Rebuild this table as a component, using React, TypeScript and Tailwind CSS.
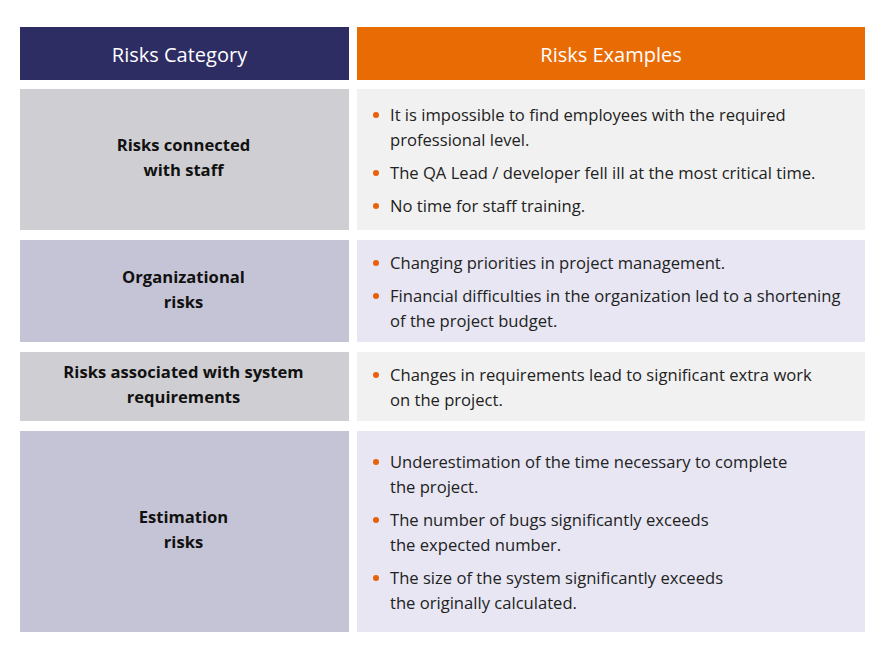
import React from "react";

const rows: { cat: React.ReactNode; items: React.ReactNode[]; h: string; left: string; right: string }[] = [
  {
    cat: (<>Risks connected<br />with staff</>),
    items: [
      (<>It is impossible to find employees with the required<br />professional level.</>),
      (<>The QA Lead / developer fell ill at the most critical time.</>),
      (<>No time for staff training.</>),
    ],
    h: "h-[141px]",
    left: "bg-[#cfcfd3]",
    right: "bg-[#f1f1f1]",
  },
  {
    cat: (<>Organizational<br />risks</>),
    items: [
      (<>Changing priorities in project management.</>),
      (<>Financial difficulties in the organization led to a shortening<br />of the project budget.</>),
    ],
    h: "h-[102px]",
    left: "bg-[#c5c4d6]",
    right: "bg-[#e7e6f2]",
  },
  {
    cat: (<>Risks associated with system<br />requirements</>),
    items: [
      (<>Changes in requirements lead to significant extra work<br />on the project.</>),
    ],
    h: "h-[69px]",
    left: "bg-[#cfcfd3]",
    right: "bg-[#f1f1f1]",
  },
  {
    cat: (<>Estimation<br />risks</>),
    items: [
      (<>Underestimation of the time necessary to complete<br />the project.</>),
      (<>The number of bugs significantly exceeds<br />the expected number.</>),
      (<>The size of the system significantly exceeds<br />the originally calculated.</>),
    ],
    h: "h-[201px]",
    left: "bg-[#c5c4d6]",
    right: "bg-[#e7e6f2]",
  },
];

export default function App() {
  return (
    <div
      className="w-[885px] h-[657px] bg-white pt-[27px] pl-[20px]"
      style={{ fontFamily: '"Open Sans", "Noto Sans", sans-serif' }}
    >
      <div className="w-[845px] flex flex-col">
        <div className="flex gap-[8px] h-[53px]">
          <div className="w-[329px] bg-[#2e2d63] text-white text-[20px] flex items-center justify-center pr-[10px] pt-[2px]">
            Risks Category
          </div>
          <div className="flex-1 bg-[#e96b04] text-white text-[20px] flex items-center justify-center pt-[2px]">
            Risks Examples
          </div>
        </div>
        <div className="flex flex-col gap-[10px] mt-[9px]">
          {rows.map((r, i) => (
            <div key={i} className={`flex gap-[8px] ${r.h}`}>
              <div
                className={`w-[329px] ${r.left} flex items-center justify-center text-center font-bold text-[16.6px] leading-[25px] text-[#111] pb-[5px] pr-[2px]`}
              >
                <div>{r.cat}</div>
              </div>
              <div className={`flex-1 ${r.right} flex items-center pl-[14px]`}>
                <ul className="flex flex-col gap-[8px] text-[16.6px] leading-[25px] text-[#222]">
                  {r.items.map((it, j) => (
                    <li key={j} className="flex">
                      <span className="w-[19px] shrink-0 flex justify-start pt-[10px] pl-[2px]">
                        <span className="block w-[6px] h-[6px] rounded-full bg-[#e8600c]" />
                      </span>
                      <span>{it}</span>
                    </li>
                  ))}
                </ul>
              </div>
            </div>
          ))}
        </div>
      </div>
    </div>
  );
}
